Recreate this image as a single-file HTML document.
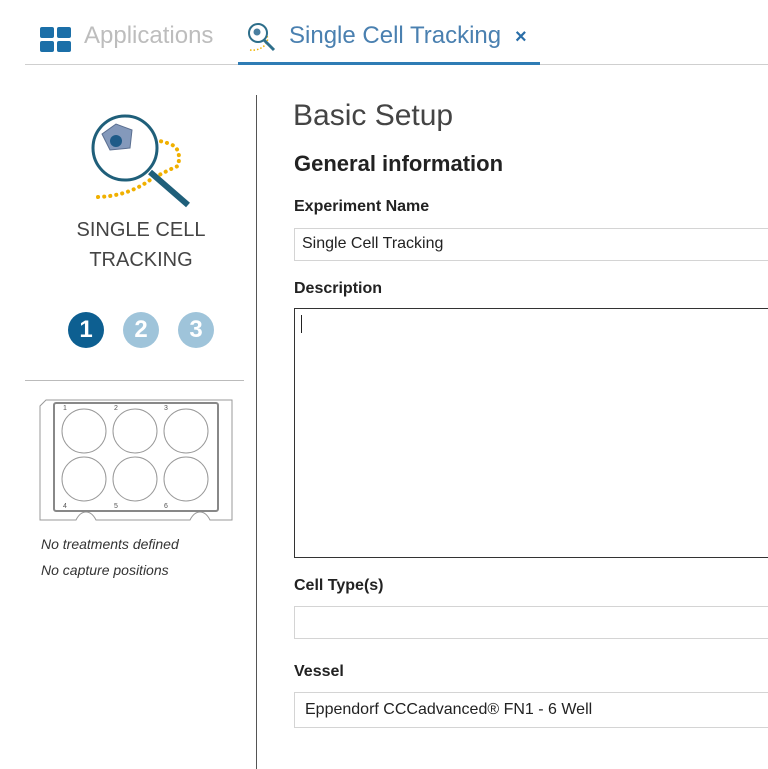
<!DOCTYPE html>
<html><head><meta charset="utf-8"><style>
*{margin:0;padding:0;box-sizing:border-box}
body{width:768px;height:769px;background:#fff;font-family:"Liberation Sans",sans-serif;position:relative;overflow:hidden;color:#222}
.a{position:absolute;white-space:nowrap}
.lbl{font-weight:bold;font-size:16px;color:#222;left:294px}
.inp{position:absolute;left:294px;width:480px;border:1px solid #d4d4d4;font-size:16px;color:#222}
</style></head><body>
<svg class="a" style="left:40px;top:27px" width="31" height="25"><rect x="0" y="0" width="14" height="11" rx="2" fill="#1b6fa8"/><rect x="17" y="0" width="14" height="11" rx="2" fill="#1b6fa8"/><rect x="0" y="14" width="14" height="11" rx="2" fill="#1b6fa8"/><rect x="17" y="14" width="14" height="11" rx="2" fill="#1b6fa8"/></svg>
<div class="a" style="left:84px;top:22px;font-size:24px;color:#bdbdbd">Applications</div>
<svg class="a" style="left:246px;top:22px" width="34" height="32"><path d="M4 28 Q12 29 18 24 Q24 18 20 12 Q18 8 14 8" fill="none" stroke="#f0b400" stroke-width="1.5" stroke-dasharray="1.5 2"/><circle cx="12" cy="11" r="9" fill="#fff" stroke="#2d6e8a" stroke-width="2"/><circle cx="11" cy="10" r="3.5" fill="#4a7fa0"/><line x1="18" y1="18" x2="28" y2="28" stroke="#2d6e8a" stroke-width="3"/></svg>
<div class="a" style="left:289px;top:22px;font-size:24px;color:#4a80b0">Single Cell Tracking</div>
<div class="a" style="left:515px;top:26px;font-size:20px;font-weight:bold;color:#2a6ea8">×</div>
<div class="a" style="left:25px;top:64px;width:743px;height:1px;background:#cfcfcf"></div>
<div class="a" style="left:238px;top:62px;width:302px;height:3px;background:#2e7cb5"></div>
<div class="a" style="left:256px;top:95px;width:1px;height:674px;background:#555"></div>
<svg class="a" style="left:88px;top:104px" width="105" height="105">
<path d="M10 93 Q40 92 62 76 Q80 66 90 62 Q94 44 82 40 Q66 34 50 36" fill="none" stroke="#f0b000" stroke-width="4" stroke-linecap="round" stroke-dasharray="0.1 6"/>
<circle cx="37" cy="44" r="32" fill="#fff" stroke="#1f5f7a" stroke-width="3"/>
<path d="M14 30 L28 20 L44 26 L42 44 L22 46 Z" fill="#8499bb" stroke="#5a6e90" stroke-width="1"/>
<circle cx="28" cy="37" r="6" fill="#1e5b88"/>
<line x1="62" y1="68" x2="100" y2="101" stroke="#1f5f7a" stroke-width="6"/>
</svg>
<div class="a" style="left:25px;width:232px;text-align:center;top:215px;font-size:20px;line-height:30px;color:#444;white-space:normal">SINGLE CELL<br>TRACKING</div>
<div class="a" style="left:68px;top:312px;width:36px;height:36px;border-radius:50%;background:#0d5f91;color:#fff;font-weight:bold;font-size:24px;text-align:center;line-height:36px">1</div>
<div class="a" style="left:123px;top:312px;width:36px;height:36px;border-radius:50%;background:#9fc4da;color:#fff;font-weight:bold;font-size:24px;text-align:center;line-height:36px">2</div>
<div class="a" style="left:178px;top:312px;width:36px;height:36px;border-radius:50%;background:#9fc4da;color:#fff;font-weight:bold;font-size:24px;text-align:center;line-height:36px">3</div>
<div class="a" style="left:25px;top:380px;width:219px;height:1px;background:#bbb"></div>
<svg class="a" style="left:38px;top:398px" width="196" height="124">
<path d="M8 2 H194 V122 H172 Q168 114 162 114 Q156 114 152 122 H58 Q54 114 48 114 Q42 114 38 122 H2 V8 Z" fill="#fff" stroke="#999" stroke-width="1"/>
<rect x="16" y="5" width="164" height="108" rx="2" fill="none" stroke="#888" stroke-width="2"/>
<g fill="none" stroke="#999"><circle cx="46" cy="33" r="22"/><circle cx="97" cy="33" r="22"/><circle cx="148" cy="33" r="22"/><circle cx="46" cy="81" r="22"/><circle cx="97" cy="81" r="22"/><circle cx="148" cy="81" r="22"/></g>
<g font-size="7" fill="#555" font-family="Liberation Sans"><text x="25" y="12">1</text><text x="76" y="12">2</text><text x="126" y="12">3</text><text x="25" y="110">4</text><text x="76" y="110">5</text><text x="126" y="110">6</text></g>
</svg>
<div class="a" style="left:41px;top:536px;font-size:14px;font-style:italic;color:#333">No treatments defined</div>
<div class="a" style="left:41px;top:562px;font-size:14px;font-style:italic;color:#333">No capture positions</div>
<div class="a" style="left:293px;top:99px;font-size:30px;color:#444">Basic Setup</div>
<div class="a" style="left:294px;top:151px;font-size:22px;font-weight:bold;color:#222">General information</div>
<div class="a lbl" style="top:198px">Experiment Name</div>
<div class="inp" style="top:228px;height:33px;padding:6px 0 0 7px">Single Cell Tracking</div>
<div class="a lbl" style="top:280px">Description</div>
<div class="inp" style="top:308px;height:250px;border-color:#333"><div style="position:absolute;left:6px;top:6px;width:1px;height:18px;background:#222"></div></div>
<div class="a lbl" style="top:577px">Cell Type(s)</div>
<div class="inp" style="top:606px;height:33px"></div>
<div class="a lbl" style="top:663px">Vessel</div>
<div class="inp" style="top:692px;height:36px;padding:8px 0 0 10px">Eppendorf CCCadvanced® FN1 - 6 Well</div>
</body></html>
